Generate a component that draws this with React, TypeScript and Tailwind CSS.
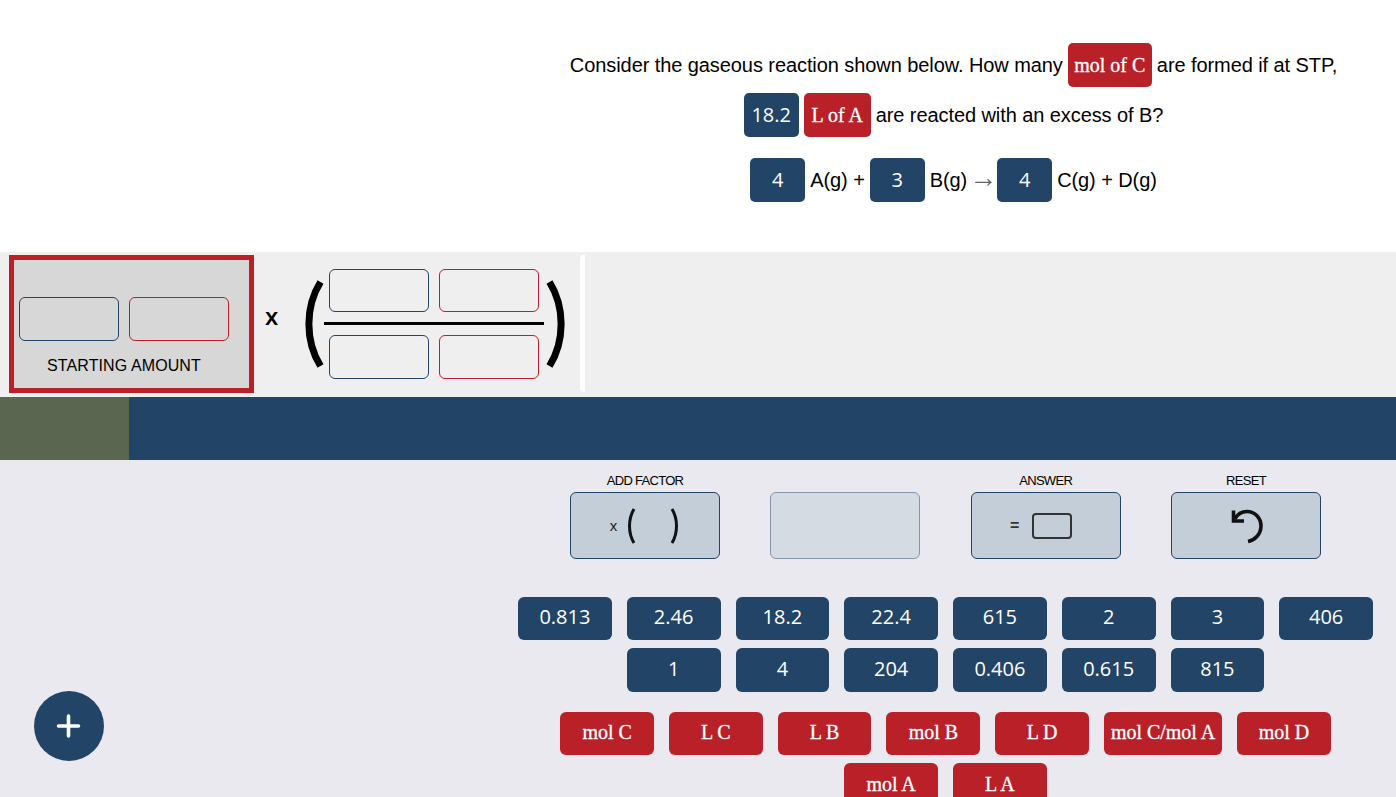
const numbers = [
  ['0.813', '2.46', '18.2', '22.4', '615', '2', '3', '406'],
  ['1', '4', '204', '0.406', '0.615', '815'],
];

const units = [
  ['mol C', 'L C', 'L B', 'mol B', 'L D', 'mol C/mol A', 'mol D'],
  ['mol A', 'L A'],
];

function NumChip({ children }: { children: string }) {
  return (
    <span className="inline-flex h-[44px] w-[55px] items-center justify-center rounded-[5px] bg-[#224466] pb-[1px] font-['Open_Sans',sans-serif] text-[20px] tracking-normal text-white">
      {children}
    </span>
  );
}

function UnitChip({ children }: { children: string }) {
  return (
    <span className="inline-flex h-[44px] min-w-[67px] items-center justify-center rounded-[5px] bg-[#b92027] px-[6.5px] pb-[1px] font-['Liberation_Serif',serif] text-[20px] tracking-normal text-white [-webkit-text-stroke:0.3px_#fff]">
      {children}
    </span>
  );
}

function Slot({ red, h = 'h-[44px]' }: { red?: boolean; h?: string }) {
  return (
    <div
      className={`w-[100px] rounded-[6px] border ${h} ${
        red ? 'border-[#b92027]' : 'border-[#224466]'
      }`}
    />
  );
}

function Paren({ flip }: { flip?: boolean }) {
  return (
    <svg
      width="24"
      height="90"
      viewBox="0 0 24 90"
      className={flip ? 'scale-x-[-1]' : ''}
    >
      <path
        d="M17.5 3 C 2 28, 2 62, 17.5 87"
        fill="none"
        stroke="#000"
        strokeWidth="7"
      />
    </svg>
  );
}

function Tool({
  label,
  faded,
  children,
}: {
  label?: string;
  faded?: boolean;
  children?: React.ReactNode;
}) {
  return (
    <div className="flex w-[150px] flex-col items-center">
      <div className="flex h-[24px] items-center pt-[1px] text-[13px] tracking-[-0.7px] text-black">
        {label}
      </div>
      <div
        className={`flex h-[67px] w-[150px] items-center justify-center rounded-[6px] border border-[#224466] bg-[#c3ced9] ${
          faded ? 'opacity-50' : ''
        }`}
      >
        {children}
      </div>
    </div>
  );
}

export default function App() {
  return (
    <div className="relative h-[797px] overflow-hidden bg-white font-['Liberation_Sans',sans-serif] text-black">
      {/* question */}
      <div className="h-[252px] pl-[511px] pt-[43px] text-[20px] tracking-[-0.08px]">
        <div className="flex h-[44px] items-center justify-center gap-[5px]">
          <span>Consider the gaseous reaction shown below. How many</span>
          <UnitChip>mol of C</UnitChip>
          <span>are formed if at STP,</span>
        </div>
        <div className="mt-[6px] flex h-[44px] items-center justify-center gap-[5px]">
          <NumChip>18.2</NumChip>
          <UnitChip>L of A</UnitChip>
          <span>are reacted with an excess of B?</span>
        </div>
        <div className="mt-[21px] flex h-[44px] items-center justify-center gap-[5px]">
          <NumChip>4</NumChip>
          <span>A(g) +</span>
          <NumChip>3</NumChip>
          <span className="flex items-center gap-[2px]">
            B(g)
            <span className="-mr-[5px] pb-[4px] text-[28px] leading-none text-[#666]">→</span>
          </span>
          <NumChip>4</NumChip>
          <span>C(g) + D(g)</span>
        </div>
      </div>

      {/* work area */}
      <div className="flex h-[145px] items-start bg-[#efefef] pl-[9px] pt-[3px]">
        <div className="flex h-[138px] w-[245px] flex-col border-[5px] border-[#b92027] bg-[#d7d7d7] pl-[5px] pt-[37px]">
          <div className="flex gap-[10px]">
            <Slot />
            <Slot red />
          </div>
          <div className="mt-[15px] w-[210px] text-center text-[16px] leading-[20px] tracking-[0.1px]">
            STARTING AMOUNT
          </div>
        </div>
        <div className="ml-[11px] mt-[45px] w-[14px] font-['Open_Sans',sans-serif] text-[24px] font-semibold leading-[32px]">
          x
        </div>
        <div className="ml-[24px] mt-[14px] flex items-center">
          <Paren />
          <div className="-ml-[3px] -mr-[1px] flex w-[220px] flex-col items-center">
            <div className="flex gap-[10px]">
              <Slot h="h-[43px]" />
              <Slot red h="h-[43px]" />
            </div>
            <div className="my-[10px] h-[3px] w-[220px] bg-black" />
            <div className="flex gap-[10px]">
              <Slot />
              <Slot red />
            </div>
          </div>
          <Paren flip />
        </div>
        <div className="ml-[13px] h-[137px] w-[5px] rounded-l-[4px] bg-white" />
      </div>

      {/* feedback bar */}
      <div className="h-[63px] bg-[#224466]">
        <div className="h-full w-[129px] bg-[#5a6650]" />
      </div>

      {/* tray */}
      <div className="h-[337px] bg-[#e9e9ef] pl-[518px]">
        <div className="w-[855px]">
          <div className="mx-auto flex w-[751px] justify-between pt-[8px]">
            <Tool label="ADD FACTOR">
              <div className="flex items-center text-[#222]">
                <span className="mr-[9px] text-[15px] leading-none">x</span>
                <svg width="54" height="36" viewBox="0 0 54 36">
                  <path d="M8 1 C 2 11, 2 25, 8 35" fill="none" stroke="#111" strokeWidth="3" />
                  <path d="M46 1 C 52 11, 52 25, 46 35" fill="none" stroke="#111" strokeWidth="3" />
                </svg>
              </div>
            </Tool>
            <Tool faded />
            <Tool label="ANSWER">
              <span className="mr-[13px] text-[16px] font-semibold leading-none text-[#333]">=</span>
              <div className="mr-[9px] h-[26px] w-[40px] rounded-[4px] border-2 border-[#333]" />
            </Tool>
            <Tool label="RESET">
              <svg width="36" height="36" viewBox="0 0 36 36" fill="none">
                <path
                  d="M7 11 C 10 5, 15 3.5, 19 3.5 C 27 3.5, 33 10, 33 18 C 33 26, 27 32, 20 33.5"
                  stroke="#111"
                  strokeWidth="3.6"
                />
                <path d="M5.5 2.5 V13 H16" stroke="#111" strokeWidth="3.6" />
              </svg>
            </Tool>
          </div>
          <div className="mt-[37.8px] flex flex-col gap-[8px]">
            {numbers.map((row, i) => (
              <div key={i} className="flex justify-center gap-[15px]">
                {row.map((n) => (
                  <div
                    key={n}
                    className="flex h-[43.5px] w-[93.75px] items-center justify-center rounded-[6px] bg-[#224466] pb-[3px] font-['Open_Sans',sans-serif] text-[20px] text-white"
                  >
                    {n}
                  </div>
                ))}
              </div>
            ))}
          </div>
          <div className="mt-[20px] flex flex-col gap-[8px]">
            {units.map((row, i) => (
              <div key={i} className="flex justify-center gap-[15px]">
                {row.map((u) => (
                  <div
                    key={u}
                    className="flex h-[43.5px] min-w-[93.75px] items-center justify-center rounded-[6px] bg-[#b92027] px-[7px] pb-[3px] font-['Liberation_Serif',serif] text-[20px] tracking-[-0.03px] text-white [-webkit-text-stroke:0.3px_#fff]"
                  >
                    {u}
                  </div>
                ))}
              </div>
            ))}
          </div>
        </div>
      </div>

      {/* add button */}
      <div className="absolute left-[34px] top-[691px] flex h-[70px] w-[70px] items-center justify-center rounded-full bg-[#224466]">
        <svg width="26" height="26" viewBox="0 0 26 26">
          <path d="M12.5 3 V23 M2.5 13 H22.5" stroke="#fff" strokeWidth="3.6" strokeLinecap="round" />
        </svg>
      </div>
    </div>
  );
}
